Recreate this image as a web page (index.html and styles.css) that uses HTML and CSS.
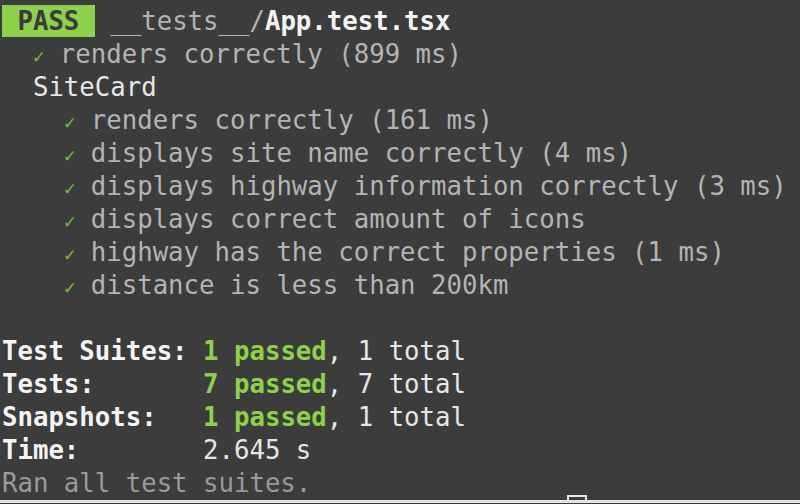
FILE: index.html
```html
<!DOCTYPE html>
<html>
<head>
<meta charset="utf-8">
<link rel="stylesheet" href="styles.css">
</head>
<body>
<div class="term">
  <div class="line"><span class="badge"> PASS </span> <span class="dim">__tests__/</span><span class="bold">App.test.tsx</span></div>
  <div class="line">  <span class="ok">✓</span> <span class="dim">renders correctly (899 ms)</span></div>
  <div class="line">  SiteCard</div>
  <div class="line">    <span class="ok">✓</span> <span class="dim">renders correctly (161 ms)</span></div>
  <div class="line">    <span class="ok">✓</span> <span class="dim">displays site name correctly (4 ms)</span></div>
  <div class="line">    <span class="ok">✓</span> <span class="dim">displays highway information correctly (3 ms)</span></div>
  <div class="line">    <span class="ok">✓</span> <span class="dim">displays correct amount of icons</span></div>
  <div class="line">    <span class="ok">✓</span> <span class="dim">highway has the correct properties (1 ms)</span></div>
  <div class="line">    <span class="ok">✓</span> <span class="dim">distance is less than 200km</span></div>
  <div class="line"> </div>
  <div class="line"><span class="bold">Test Suites: </span><span class="pass">1 passed</span>, 1 total</div>
  <div class="line"><span class="bold">Tests:       </span><span class="pass">7 passed</span>, 7 total</div>
  <div class="line"><span class="bold">Snapshots:   </span><span class="pass">1 passed</span>, 1 total</div>
  <div class="line"><span class="bold">Time:        </span>2.645 s</div>
  <div class="line muted">Ran all test suites.</div>
</div>
<div class="strip"><span class="cursor"></span></div>
</body>
</html>
```

FILE: styles.css
```css
html, body {
  margin: 0;
  padding: 0;
  background: #3c3c3c;
  height: 504px;
  overflow: hidden;
}
body {
  position: relative;
}
.term {
  padding: 5px 0 0 2px;
  font-family: "DejaVu Sans Mono", "Liberation Mono", monospace;
  font-size: 25.7px;
  line-height: 33px;
  color: #e6e6e6;
}
.line {
  height: 33px;
  white-space: pre;
}
.badge {
  display: inline-block;
  line-height: 32px;
  background: #8ed14a;
  color: #3a3a3a;
  font-weight: bold;
}
.dim {
  color: #b4b4b4;
}
.bold {
  color: #f4f4f4;
  font-weight: bold;
}
.ok {
  color: #7ab83f;
  font-size: 19px;
}
.pass {
  color: #8ed14a;
  font-weight: bold;
}
.muted {
  color: #9a9a9a;
}
.strip {
  height: 3px;
  background: #e4e4e4;
}
.cursor {
  position: absolute;
  left: 567px;
  top: 495px;
  width: 16px;
  height: 6px;
  border: 2px solid #e8e8e8;
  border-bottom: none;
}
```
